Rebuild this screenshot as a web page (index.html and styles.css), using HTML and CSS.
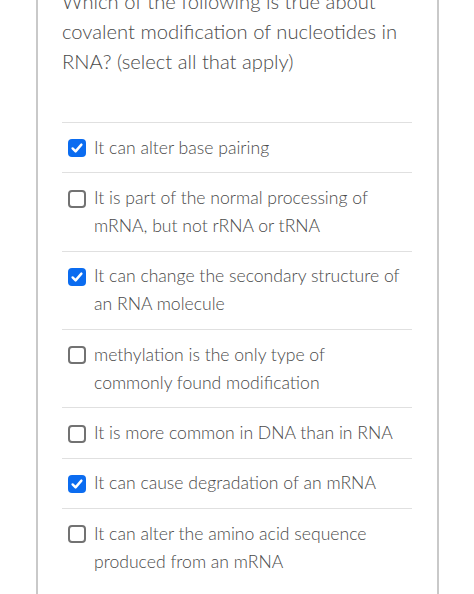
FILE: index.html
```html
<!DOCTYPE html>
<html lang="en">
<head>
<meta charset="utf-8">
<link rel="stylesheet" href="styles.css">
</head>
<body>
<div class="card">
  <p class="question">Which of the following is true about covalent modification of nucleotides in RNA? (select all that apply)</p>
  <ul class="options">
    <li class="option"><span class="box checked"><svg viewBox="0 0 18 18" width="18" height="18"><path d="M4.6 9.4 L7.6 12.4 L13.4 5.6" fill="none" stroke="#fff" stroke-width="2.4" stroke-linecap="round" stroke-linejoin="round"/></svg></span><span class="label">It can alter base pairing</span></li>
    <li class="option"><span class="box"></span><span class="label">It is part of the normal processing of mRNA, but not rRNA or tRNA</span></li>
    <li class="option"><span class="box checked"><svg viewBox="0 0 18 18" width="18" height="18"><path d="M4.6 9.4 L7.6 12.4 L13.4 5.6" fill="none" stroke="#fff" stroke-width="2.4" stroke-linecap="round" stroke-linejoin="round"/></svg></span><span class="label">It can change the secondary structure of an RNA molecule</span></li>
    <li class="option"><span class="box"></span><span class="label">methylation is the only type of commonly found modification</span></li>
    <li class="option"><span class="box"></span><span class="label">It is more common in DNA than in RNA</span></li>
    <li class="option"><span class="box checked"><svg viewBox="0 0 18 18" width="18" height="18"><path d="M4.6 9.4 L7.6 12.4 L13.4 5.6" fill="none" stroke="#fff" stroke-width="2.4" stroke-linecap="round" stroke-linejoin="round"/></svg></span><span class="label">It can cause degradation of an mRNA</span></li>
    <li class="option"><span class="box"></span><span class="label">It can alter the amino acid sequence produced from an mRNA</span></li>
  </ul>
</div>
</body>
</html>
```

FILE: styles.css
```css
html, body {
  margin: 0;
  padding: 0;
  background: #ffffff;
  overflow: hidden;
}

body {
  font-family: Lato, "Open Sans", sans-serif;
  font-weight: 300;
  color: #4a4a4a;
}

.card {
  box-sizing: border-box;
  margin: -14px 0 0 36px;
  width: 403px;
  border-left: 2px solid #c9c9c9;
  border-right: 2px solid #c9c9c9;
  padding: 0 25px 40px 24px;
  min-height: 700px;
}

.question {
  margin: 0;
  font-size: 20.2px;
  line-height: 30px;
  padding-bottom: 46px;
}

.options {
  list-style: none;
  margin: 0;
  padding: 0;
}

.option {
  display: flex;
  align-items: flex-start;
  gap: 8px;
  border-top: 1px solid #e0e0e0;
  padding: 10.8px 0 10.53px 6px;
  font-size: 17.6px;
  line-height: 28px;
}

.box {
  flex: none;
  width: 18px;
  height: 18px;
  box-sizing: border-box;
  margin-top: 5.5px;
  border: 2px solid #727272;
  border-radius: 4px;
}

.box.checked {
  border: none;
  background: #0b6cf0;
}

.box svg {
  display: block;
}

.label {
  flex: 1;
  padding-right: 9px;
}
```
